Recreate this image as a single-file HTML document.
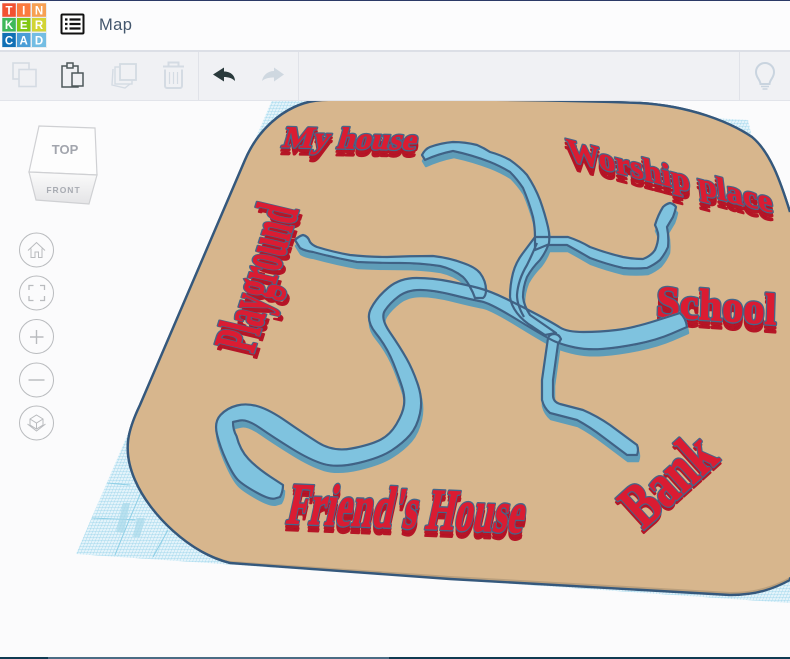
<!DOCTYPE html>
<html><head><meta charset="utf-8"><title>Map</title>
<style>
html,body{margin:0;padding:0;background:#fbfbfc;width:790px;height:659px;overflow:hidden}
svg{display:block}
.lg{font:bold 11.500px "Liberation Sans",sans-serif;fill:#fff;text-anchor:middle}
.t3{font-family:"Liberation Serif",serif;font-weight:bold}
.ex{fill:#b51226;stroke:#b51226;stroke-width:2.400;stroke-linejoin:round}
.tp{fill:#da1b31;stroke:#44668a;stroke-width:3.800;stroke-linejoin:round}
.tq{fill:#da1b31;stroke:#da1b31;stroke-width:1.100}
.sm .tp{stroke-width:3.200}
.sm .tq{stroke-width:.7}
.rs{fill:#5f9db8;stroke:#5f9db8;stroke-width:2.500;stroke-linejoin:round}
.rt{fill:#7fc3df;stroke:#7fc3df;stroke-width:2.200;stroke-linejoin:round}
.rl{fill:none;stroke:#3f6285;stroke-width:2.200;stroke-linejoin:round}
.ic{fill:none;stroke:#b9bbbe;stroke-width:1}
</style></head>
<body>
<svg width="790" height="659" viewBox="0 0 790 659" xmlns="http://www.w3.org/2000/svg">
<defs>
<filter id="soft" x="-2%" y="-2%" width="104%" height="104%"><feGaussianBlur stdDeviation=".3"/></filter>
<pattern id="g" width="3.200" height="3" patternUnits="userSpaceOnUse" patternTransform="skewX(-22)">
<rect width="3.200" height="3" fill="#e3f3fa"/>
<path d="M0 0H3.200M0 0V3" stroke="#8ed0e8" stroke-width=".7"/>
</pattern>
<linearGradient id="fr" x1="0" y1="0" x2="0" y2="1"><stop offset="0" stop-color="#fbfbfb"/><stop offset="1" stop-color="#e4e4e6"/></linearGradient>
<path id="ra" d="M280 497L275 498.500Q270 500 256.500 492.500Q243 485 238 480Q233 475 226.500 461Q220 447 217 434.500Q214 422 220.500 415Q227 408 237 405.500Q247 403 258.500 406.500Q270 410 286.500 421.500Q303 433 318 442.500Q333 452 351.500 448.500Q370 445 380 440Q390 435 396.500 424Q403 413 404 405Q405 397 402.500 388.500Q400 380 393.500 363.500Q387 347 376 333.500Q365 320 371 308.500Q377 297 388.500 287.500Q400 278 416.500 278Q433 278 450 281.500Q467 285 478.500 288Q490 291 506.500 299Q523 307 538 315Q553 323 560 327.500Q567 332 583.500 332Q600 332 616.500 330Q633 328 656.500 320.500L680 313Q686 318 687 327L672 333.500Q657 340 637 344Q617 348 602 349Q587 350 575 347.500Q563 345 555 341.500Q547 338 518.500 320.500Q490 303 481.500 301.500Q473 300 453 295Q433 290 420 290Q407 290 398.500 296.500Q390 303 385 310.500Q380 318 390 332.500Q400 347 406.500 358.500Q413 370 418 385Q423 400 420 413.500Q417 427 410 435Q403 443 391.500 450.500Q380 458 358.500 463Q337 468 323.500 464Q310 460 291.500 448.500Q273 437 260 428Q247 419 240 420.500L233 422Q233 430 236.500 436Q240 450 248.500 459Q257 468 270 476.500L283 485Q283 492 280 497Z"/>
<path id="rb" d="M295 240Q299 236 303 235Q308 236 310 242Q312 245 317 247Q333 252 350 255Q368 257 387 257Q410 256 433 256Q450 258 463 263Q475 267 480 273Q486 281 486 290Q486 296 483 298L475 298Q473 292 470 287Q467 281 463 277Q453 269 440 266Q420 263 400 263Q378 263 357 262Q335 258 313 252Q305 251 300 248Z"/>
<path id="rc" d="M422 155Q425 149 430 147Q441 143 453 142Q465 142 477 145Q484 148 490 152Q501 155 510 160Q520 167 527 175Q535 187 540 200Q545 214 548 227Q550 235 549 243Q546 252 540 260Q532 268 527 277Q523 287 523 297Q524 306 530 315Q543 324 556 333L545 335Q539 331 533 327Q523 321 517 313Q511 305 510 297Q510 285 513 273Q516 262 523 253Q529 245 535 237Q535 227 533 217Q529 202 523 188Q517 179 510 172Q500 166 490 162Q472 155 453 151Q438 154 425 160Z"/>
<path id="rd" d="M535 237L568 237Q580 241 590 247Q606 253 623 257Q633 259 643 259Q651 256 655 250Q659 241 658 233Q657 229 655 225Q658 215 663 207Q666 204 670 203Q674 204 676 207Q675 212 673 217Q670 222 667 227Q669 237 668 247Q665 254 660 260Q654 265 647 268Q635 269 623 268Q606 264 590 258Q578 251 567 245L547 245L535 250Z"/>
<path id="re" d="M548 338C550 333 558 332 561 339L558 344L553 380L553 395Q553 402 560 404L583 410Q597 416 610 425L637 445Q639 450 637 455L627 455Q615 446 603 437Q590 427 577 420L550 413Q544 408 542 400L542 380L547 345Z"/>
</defs>

<rect width="790" height="659" fill="#fbfbfc"/>

<!-- workplane grid -->
<polygon points="76,554 272,100 400,100 748,120 752,137 790,300 790,603" fill="url(#g)"/>
<g stroke="#8fcfe6" stroke-width="1" fill="none">
<path d="M107 483L130 485M92 518L135 520M115 555L130 518L142 490M153 557L168 530"/>
</g>
<path d="M123 503L130 503L124 533L116 532ZM137 518L145 518L140 537L133 537Z" fill="#a8d8e9" opacity=".7"/>

<g filter="url(#soft)">
<!-- plate -->
<path d="M322 100C400 98 560 100 640 103C690 106 730 122 752 137C770 152 780 180 790 212V580C775 588 758 595 730 595L450 579L230 563C190 553 150 515 135 480C122 450 128 430 140 405L245 160C260 125 290 102 322 100Z" fill="#ba9f7b" stroke="#35587c" stroke-width="2.400"/>
<path d="M322 100C400 98 560 100 640 103C690 106 730 122 752 137C770 152 780 180 790 212V577C775 585 758 592 730 592L450 576L230 561C190 552 150 515 135 480C122 450 128 430 140 405L245 160C260 125 290 102 322 100Z" fill="#d7b68d"/>
<path d="M230 563C190 553 150 515 135 480C122 450 128 430 140 405L245 160C260 125 290 102 322 100C400 98 560 100 640 103C690 106 730 122 752 137C770 152 780 180 790 212" fill="none" stroke="#35587c" stroke-width="2.400"/>

<!-- School (behind road) -->
<g font-size="44">
<g transform="translate(0,8)"><text class="t3 ex" transform="matrix(1,.07,-.03,1,656,316)" textLength="120" lengthAdjust="spacingAndGlyphs">School</text></g>
<g transform="translate(0,4)"><text class="t3 ex" transform="matrix(1,.07,-.03,1,656,316)" textLength="120" lengthAdjust="spacingAndGlyphs">School</text></g>
<text class="t3 tp" transform="matrix(1,.07,-.03,1,656,316)" textLength="120" lengthAdjust="spacingAndGlyphs">School</text>
<text class="t3 tq" transform="matrix(1,.07,-.03,1,656,316)" textLength="120" lengthAdjust="spacingAndGlyphs">School</text>
</g>

<!-- roads -->
<g transform="translate(1,6)" class="rs">
<use href="#ra"/><use href="#rb"/><use href="#rc"/><use href="#rd"/><use href="#re"/>
</g>
<g class="rt"><use href="#ra"/><use href="#rb"/><use href="#rc"/><use href="#rd"/><use href="#re"/></g>
<g class="rl"><use href="#ra"/><use href="#rb"/><use href="#rc"/><use href="#rd"/><use href="#re"/>
<path d="M537 243Q532 255 527 265Q518 280 517 295Q517 305 524 317"/>
</g>

<!-- My house -->
<g font-size="30" class="sm">
<g transform="translate(0,7)"><text class="t3 ex" transform="matrix(1,.02,-.3,1,281,147)" textLength="134" lengthAdjust="spacingAndGlyphs">My house</text></g>
<g transform="translate(0,3.500)"><text class="t3 ex" transform="matrix(1,.02,-.3,1,281,147)" textLength="134" lengthAdjust="spacingAndGlyphs">My house</text></g>
<text class="t3 tp" transform="matrix(1,.02,-.3,1,281,147)" textLength="134" lengthAdjust="spacingAndGlyphs">My house</text>
<text class="t3 tq" transform="matrix(1,.02,-.3,1,281,147)" textLength="134" lengthAdjust="spacingAndGlyphs">My house</text>
</g>

<!-- Worship place -->
<g font-size="34" class="sm">
<g transform="translate(0,8)"><text class="t3 ex" transform="matrix(.97,.25,.12,.95,568,160)" textLength="212" lengthAdjust="spacingAndGlyphs">Worship place</text></g>
<g transform="translate(0,4)"><text class="t3 ex" transform="matrix(.97,.25,.12,.95,568,160)" textLength="212" lengthAdjust="spacingAndGlyphs">Worship place</text></g>
<text class="t3 tp" transform="matrix(.97,.25,.12,.95,568,160)" textLength="212" lengthAdjust="spacingAndGlyphs">Worship place</text>
<text class="t3 tq" transform="matrix(.97,.25,.12,.95,568,160)" textLength="212" lengthAdjust="spacingAndGlyphs">Worship place</text>
</g>

<!-- Friend's House -->
<g font-size="58">
<g transform="translate(0,7)"><text class="t3 ex" transform="matrix(1,.04,-.22,1,285,523)" textLength="237" lengthAdjust="spacingAndGlyphs">Friend's House</text></g>
<g transform="translate(0,3.500)"><text class="t3 ex" transform="matrix(1,.04,-.22,1,285,523)" textLength="237" lengthAdjust="spacingAndGlyphs">Friend's House</text></g>
<text class="t3 tp" transform="matrix(1,.04,-.22,1,285,523)" textLength="237" lengthAdjust="spacingAndGlyphs">Friend's House</text>
<text class="t3 tq" transform="matrix(1,.04,-.22,1,285,523)" textLength="237" lengthAdjust="spacingAndGlyphs">Friend's House</text>
</g>

<!-- Bank -->
<g font-size="63">
<g transform="translate(0,3.500)"><text class="t3 ex" transform="matrix(.74,-.67,.67,.74,643,530)" textLength="105" lengthAdjust="spacingAndGlyphs">Bank</text></g>
<text class="t3 tp" transform="matrix(.74,-.67,.67,.74,643,530)" textLength="105" lengthAdjust="spacingAndGlyphs">Bank</text>
<text class="t3 tq" transform="matrix(.74,-.67,.67,.74,643,530)" textLength="105" lengthAdjust="spacingAndGlyphs">Bank</text>
</g>

<!-- Playground -->
<g font-size="60">
<g transform="translate(3,5)"><text class="t3 ex" transform="matrix(.3,-.95,.97,.23,253,354)" textLength="152" lengthAdjust="spacingAndGlyphs">Playground</text></g>
<text class="t3 tp" transform="matrix(.3,-.95,.97,.23,253,354)" textLength="152" lengthAdjust="spacingAndGlyphs">Playground</text>
<text class="t3 tq" transform="matrix(.3,-.95,.97,.23,253,354)" textLength="152" lengthAdjust="spacingAndGlyphs">Playground</text>
</g>
</g>

<!-- header -->
<rect x="0" y="0" width="790" height="51" fill="#fcfcfd"/>
<rect x="0" y="0" width="790" height="1" fill="#2b3a67"/>
<rect x="0" y="50" width="790" height="2" fill="#dcdfe6"/>
<rect x="2" y="3" width="45" height="45" fill="#e8edf0"/>
<rect x="2.300" y="3.300" width="13.500" height="13.500" fill="#f25232"/><rect x="17" y="3.300" width="13.500" height="13.500" fill="#fb7a3e"/><rect x="32" y="3.300" width="14" height="13.500" fill="#f7a052"/>
<rect x="2.300" y="18" width="13.500" height="13.500" fill="#3eb85a"/><rect x="17" y="18" width="13.500" height="13.500" fill="#82c714"/><rect x="32" y="18" width="14" height="13.500" fill="#d2d435"/>
<rect x="2.300" y="33" width="13.500" height="14" fill="#1170b5"/><rect x="17" y="33" width="13.500" height="14" fill="#4a9dd6"/><rect x="32" y="33" width="14" height="14" fill="#74bde3"/>
<text class="lg" x="9" y="14.500">T</text><text class="lg" x="23.700" y="14.500">I</text><text class="lg" x="39" y="14.500">N</text>
<text class="lg" x="9" y="29">K</text><text class="lg" x="23.700" y="29">E</text><text class="lg" x="39" y="29">R</text>
<text class="lg" x="9" y="44.500">C</text><text class="lg" x="23.700" y="44.500">A</text><text class="lg" x="39" y="44.500">D</text>
<!-- list icon -->
<rect x="61.500" y="14.500" width="22" height="19" rx="1" fill="#fff" stroke="#111" stroke-width="2"/>
<path d="M65 19.500H67.500M69.500 19.500H80.500M65 24H67.500M69.500 24H80.500M65 28.500H67.500M69.500 28.500H80.500" stroke="#111" stroke-width="2.200"/>
<text x="99" y="30" font-family="'Liberation Sans',sans-serif" font-size="16.500" fill="#43566d" letter-spacing=".4">Map</text>

<!-- toolbar -->
<rect x="0" y="52" width="790" height="48" fill="#f0f1f4"/>
<rect x="0" y="100" width="790" height="1" fill="#e2e4ea"/>
<path d="M198.500 52V100M298.500 52V100M739.500 52V100" stroke="#e0e2e8"/>
<g fill="none" stroke="#d4dbe3" stroke-width="1.600">
<rect x="13" y="63" width="16" height="16"/>
<rect x="19" y="69.500" width="17" height="17" fill="#f0f1f4"/>
</g>
<g fill="none" stroke="#4e595b" stroke-width="1.500">
<rect x="62" y="66" width="16" height="21"/>
<rect x="67" y="63" width="6" height="5" fill="#f0f1f4"/>
<rect x="72" y="73" width="11" height="13" fill="#f0f1f4"/>
</g>
<g fill="none" stroke="#d4dbe3" stroke-width="1.400">
<path d="M113 69L112 85L125 88L130 84"/>
<rect x="115" y="67" width="17" height="17" fill="#f0f1f4"/>
<rect x="120" y="64" width="16" height="16" fill="#f0f1f4" stroke-width="1.800"/>
</g>
<g fill="none" stroke="#d4dbe3" stroke-width="2">
<path d="M163 66.500H184M168.500 66V62.500H178.500V66"/>
<path d="M165 69.500V86A2 2 0 0 0 167 88H180A2 2 0 0 0 182 86V69.500"/>
<path d="M169.500 72V84M173.500 72V84M177.500 72V84" stroke-width="1.200"/>
</g>
<path d="M213 74.500L224 67.500V71.500C230 71.500 235 75 235 81C232 78 228 77 224 77V81.500Z" fill="#2a3a3c"/>
<path d="M284 74.500L274 67.500V71C268 71 263 75 262 81C265 78 270 77.500 274 77.500V81.500Z" fill="#cfd8e0"/>
<g fill="none" stroke="#c9d4df" stroke-width="2">
<path d="M760.500 84C760 79 756 78 756 72A9 9 0 0 1 774 72C774 78 770 79 769.500 84Z"/>
<path d="M761 86.500H769M762.500 89H767.500" stroke-width="1.500"/>
</g>

<!-- view cube -->
<polygon points="39,126 95,128 97,175 29,172" fill="#fdfdfd" stroke="#cfd0d3" stroke-width="1.200"/>
<polygon points="29,172 97,175 89,204 36,200" fill="url(#fr)" stroke="#cfd0d3" stroke-width="1.200"/>
<text x="65" y="154" text-anchor="middle" font-family="'Liberation Sans',sans-serif" font-weight="bold" font-size="13" fill="#a2a5ad">TOP</text>
<text x="63.500" y="193" text-anchor="middle" font-family="'Liberation Sans',sans-serif" font-weight="bold" font-size="8.500" letter-spacing="1" fill="#a8abb2">FRONT</text>

<!-- view controls -->
<g class="ic">
<circle cx="36.500" cy="250" r="17"/><circle cx="36.500" cy="293" r="17"/><circle cx="36.500" cy="336.500" r="17"/><circle cx="36.500" cy="380" r="17"/><circle cx="36.500" cy="423" r="17"/>
<path d="M28 250.500L36.500 242.500L45 250.500M31 248.500V257.500H35V252H38.500V257.500H42V248.500"/>
<path d="M29 290V285.500H33.500M40 285.500H44.500V290M29 296V300.500H33.500M40 300.500H44.500V296" stroke-width="1.300"/>
<path d="M30 337H43.500M36.500 330V344" stroke-width="1.400"/>
<path d="M28.500 380H44.500" stroke-width="1.400"/>
<path d="M36.500 415L43 419V425L36.500 429L30 425V419ZM30 419L36.500 423L43 419M36.500 423V429M27.500 424L36.500 431L45.500 424"/>
</g>

<!-- bottom bar -->
<rect x="0" y="657" width="790" height="2" fill="#0f3a52"/>
<rect x="48" y="657" width="341" height="2" fill="#4a6c84"/>
</svg>
</body></html>
